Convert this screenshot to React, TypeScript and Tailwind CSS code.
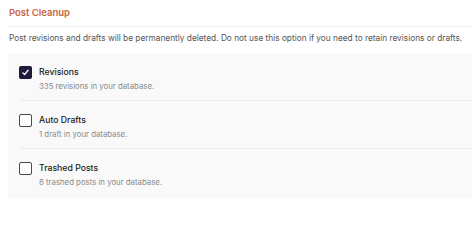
import { useState } from 'react';

interface CleanupItem {
  id: string;
  label: string;
  detail: string;
}

const items: CleanupItem[] = [
  { id: 'revisions', label: 'Revisions', detail: '335 revisions in your database.' },
  { id: 'drafts', label: 'Auto Drafts', detail: '1 draft in your database.' },
  { id: 'trashed', label: 'Trashed Posts', detail: '8 trashed posts in your database.' },
];

export default function App() {
  const [checked, setChecked] = useState<Record<string, boolean>>({ revisions: true });

  return (
    <div className="w-[474px] h-[207px] bg-white font-['Inter',sans-serif] pl-2 pr-[2px] pt-[6px]">
      <h2 className="text-[9.5px] font-semibold text-[#c8653f] pl-[1px] leading-[14px] pb-[6px] border-b border-[#eeeeee]">
        Post Cleanup
      </h2>
      <p className="text-[8.3px] text-[#555555] pl-[1px] pt-[5px] leading-[12px]">
        Post revisions and drafts will be permanently deleted. Do not use this option if you need to retain revisions or drafts.
      </p>
      <div className="mt-[9px] bg-[#f9f9f9] pl-[11px]">
        {items.map((item, i) => (
          <label
            key={item.id}
            className={`flex items-start gap-[7px] pt-[13px] ${
              i < items.length - 1 ? 'pb-[8px] border-b border-[#ececec]' : 'pb-[10px]'
            }`}
          >
            <button
              type="button"
              onClick={() => setChecked({ ...checked, [item.id]: !checked[item.id] })}
              className={`w-[13px] h-[13px] rounded-[2px] flex items-center justify-center shrink-0 ${
                checked[item.id] ? 'bg-[#1e1a3c]' : 'border-[1.5px] border-[#4a4a4a] bg-white'
              }`}
            >
              {checked[item.id] && (
                <svg viewBox="0 0 12 12" className="w-[9px] h-[9px]" fill="none">
                  <path d="M2.5 6.5l2.3 2.3L9.5 3" stroke="white" strokeWidth="1.8" strokeLinecap="round" strokeLinejoin="round" />
                </svg>
              )}
            </button>
            <div>
              <div className="text-[8.7px] font-medium text-[#222222] leading-[12px]">{item.label}</div>
              <div className="text-[7.8px] text-[#8a8a8a] leading-[12px] mt-[2px]">{item.detail}</div>
            </div>
          </label>
        ))}
      </div>
    </div>
  );
}
